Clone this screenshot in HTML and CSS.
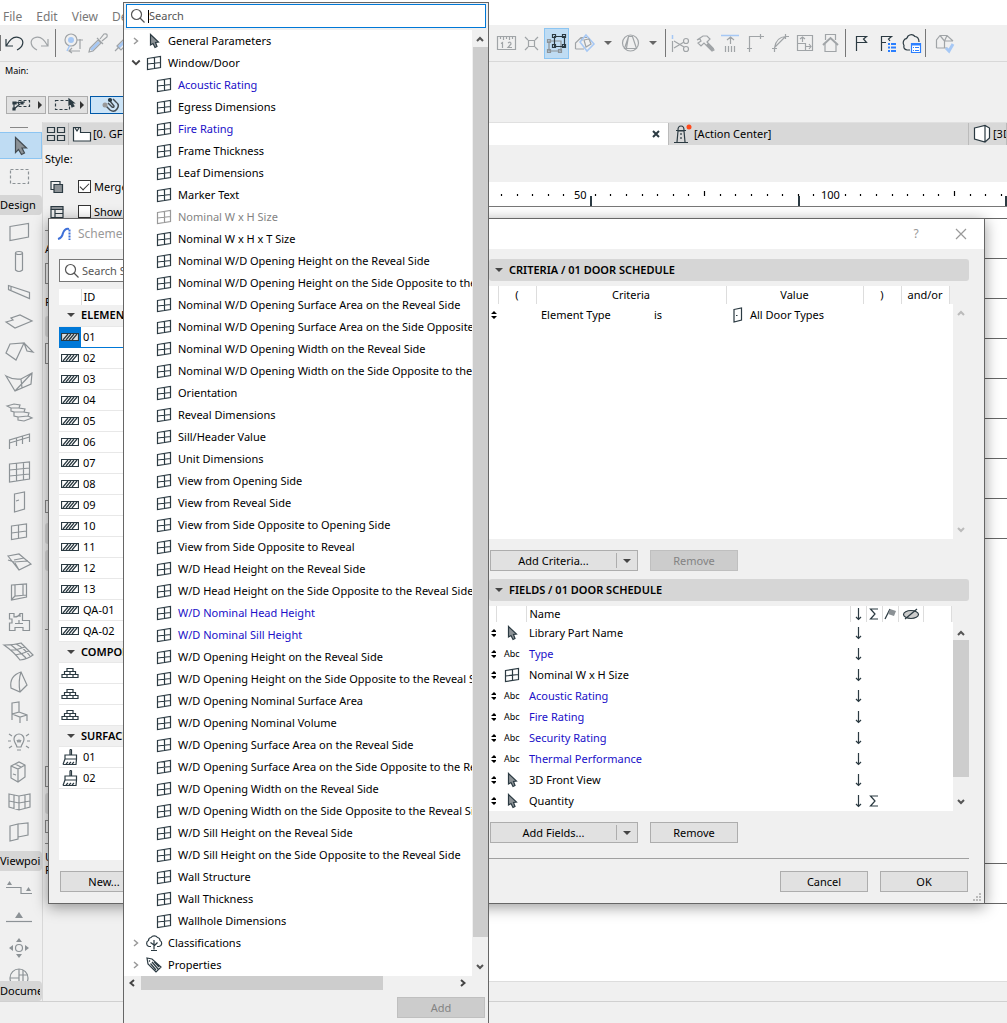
FILE: index.html
```html
<!DOCTYPE html>
<html lang="en">
  <head>
    <meta charset="UTF-8" />
    <meta name="viewport" content="width=device-width, initial-scale=1.0" />
    <title>Scheme Settings</title>
    <link rel="stylesheet" href="styles.css">
  </head>
  <body>
    <svg class="sprite" aria-hidden="true">
      <symbol id="window" viewBox="0 0 16 16"><path d="M1.500 3.500 14.500 1.500V12.500L1.500 14.500ZM8.500 2.500V13.500M1.500 9 14.500 7.500" /></symbol>
      <symbol id="cursor" viewBox="0 0 16 16"><path class="fill" d="M4.500 1.500V12L7 10.500 9 14.500 11 13.500 9.500 9.500 12.500 9Z" /></symbol>
      <symbol id="tree" viewBox="0 0 18 18"><path d="M6 12.500H4A3.200 3.200 0 0 1 3.500 6.500 3 3 0 0 1 6 3.500 4 4 0 0 1 12.500 3.500 3 3 0 0 1 15 6.500 3.200 3.200 0 0 1 14 12.500H12M9 6V15.500M9 11 5.500 8.500M9 12 12.500 8.500M6 16.500H12" /></symbol>
      <symbol id="tag" viewBox="0 0 18 18"><path d="M2 2 7 3 16 11 11 16 3 8ZM7 6 13 13M9 5.500 14 11M5.500 7.500 11 14M4 4.500 5 5.500" /></symbol>
      <symbol id="glass" viewBox="0 0 16 16"><circle cx="6.500" cy="6.500" r="5" /><path d="M10 10 14.500 14.500" /></symbol>
      <symbol id="hatch" viewBox="0 0 18 8"><path d="M.5.5H17.500V7.500H.5ZM2 7 7 1M5 7 10 1M8 7 13 1M11 7 16 1" /></symbol>
      <symbol id="bricks" viewBox="0 0 18 12"><path d="M6 1.500H12V4.500H6ZM3.500 4.500H14.500V7.500H3.500ZM1 7.500H17V10.500H1ZM9 4.500V7.500M6 7.500V10.500M12 7.500V10.500" /></symbol>
      <symbol id="brush" viewBox="0 0 18 18"><path d="M9 1.500V6.500M10.500 1.500V6.500M9 1.500H10.500M4 7H15.500V11H4ZM4 11 2 16.500M15.500 11 15 16.500H2M5 16 7 14M8 16 10 14M11 16 13 14" /></symbol>
      <symbol id="door" viewBox="0 0 12 16"><path d="M2 2.500 9.500 1V13L2 15ZM4 8.500H5.500" /></symbol>
      <symbol id="down" viewBox="0 0 8 14"><path d="M4.500 1V12M2 10 4.500 12.500 7 10" /></symbol>
      <symbol id="sigma" viewBox="0 0 10 12"><path d="M9 1H1.500L6 6 1.500 11H9" /></symbol>
      <symbol id="chev-up" viewBox="0 0 8 6"><path d="M1 5 4 2 7 5" /></symbol>
      <symbol id="chev-down" viewBox="0 0 8 6"><path d="M1 1 4 4 7 1" /></symbol>
      <symbol id="chev-right" viewBox="0 0 6 8"><path d="M1 1 4.500 4 1 7" /></symbol>
      <symbol id="chev-left" viewBox="0 0 6 8"><path d="M5 1 1.500 4 5 7" /></symbol>
      <symbol id="caret" viewBox="0 0 8 4"><path d="M0 0H8L4 4Z" /></symbol>
      <symbol id="grab" viewBox="0 0 6 8"><path d="M3 0 6 3H0ZM3 8 0 5H6Z" /></symbol>
    </svg>

    <div class="app">
      <nav class="menubar">
        <a href="#">File</a>
        <a href="#">Edit</a>
        <a href="#">View</a>
        <a href="#">Design</a>
      </nav>

      <div class="toolbar">
        <span class="sep"></span>
        <button class="tool dark" aria-label="Undo"><svg viewBox="0 0 25 24"><path d="M4 8V15H11M4.500 14.500C9 6 14 5 18 7 23 10 21 16 15 19" /></svg></button>
        <button class="tool" aria-label="Redo"><svg viewBox="0 0 25 24"><path d="M21 8V15H14M20.500 14.500C16 6 11 5 7 7 2 10 4 16 10 19" /></svg></button>
        <span class="sep left-sep"></span>
        <button class="tool" aria-label="Find and select"><svg viewBox="0 0 25 24"><circle cx="10" cy="9" r="6" /><circle class="sky-fill" cx="10" cy="9" r="3" /><path class="sky" d="M9 14 6 20" /><path d="M16 9H22M19 8V18M8 20H19M11 17 8 20 11 22" /></svg></button>
        <button class="tool" aria-label="Pick up parameters"><svg viewBox="0 0 25 24"><path class="sky thick" d="M5 19 13 11" /><path d="M3 21 4 17 12 9 15 12 7 20ZM11 7 17 13M14 8 18 3Q22 2 21 6L16 10" /></svg></button>
        <button class="tool" aria-label="Inject parameters"><svg viewBox="0 0 25 24"><path class="sky thick" d="M7 17 14 10" /><path d="M4 20 7 17M6 15 15 6 19 10 10 19Z" /></svg></button>
        <span class="toolbar-gap"></span>
        <button class="tool" aria-label="Measure"><svg viewBox="0 0 25 24"><path d="M3.500 5.500H21.500V18.500H3.500ZM6.500 6V8M9.500 6V9M12.500 6V8M15.500 6V9M18.500 6V8M7 12.500 8.500 11.500V17M14 12Q17 10 17 13L14 16.500H18" /></svg></button>
        <button class="tool" aria-label="Snap"><svg viewBox="0 0 25 24"><path d="M9.500 9.500H15.500V15.500H9.500ZM6 6 9 9M19 6 16 9M6 19 9 16M19 19 16 16" /></svg></button>
        <button class="tool pressed" aria-label="Suspend groups"><svg viewBox="0 0 25 24"><path class="mid" d="M5 10H17V20H5ZM3.500 8.500H6.500V11.500H3.500ZM3.500 18.500H6.500V21.500H3.500ZM14.500 18.500H17.500V21.500H14.500Z" /><path class="ink" d="M10.500 5.500H20.500V15.500H10.500ZM8.500 3.500H11.500V6.500H8.500ZM18.500 3.500H21.500V6.500H18.500ZM8.500 13.500H11.500V16.500H8.500ZM18.500 13.500H21.500V16.500H18.500Z" /></svg></button>
        <button class="tool next-tool" aria-label="Trace"><svg viewBox="0 0 25 24"><path d="M2.500 18V12L8 6.500H14M2.500 18H11M8 7 9 10" /><path class="sky" d="M13 4 21 13 14 20 7 11Z" /><path d="M11 9 16 8 18 13 13 16Z" /></svg></button>
        <button class="tool more" aria-label="Trace options"><svg class="caret"><use href="#caret" /></svg></button>
        <button class="tool" aria-label="Reference"><svg viewBox="0 0 25 24"><circle cx="12.500" cy="12" r="8" /><path d="M10.500 5.500H14.500L18.500 17.500H6.500ZM10.500 5.500 8.500 17" /></svg></button>
        <button class="tool more" aria-label="Reference options"><svg class="caret"><use href="#caret" /></svg></button>
        <span class="sep"></span>
        <button class="tool" aria-label="Split"><svg viewBox="0 0 25 24"><path class="sky" d="M4.500 4V8" /><path d="M4.500 10V21M6 10 16 16M6 17 16 11" /><circle cx="18" cy="10" r="2.500" /><circle cx="18" cy="18" r="2.500" /></svg></button>
        <button class="tool" aria-label="Adjust"><svg viewBox="0 0 25 24"><path d="M4 9 10 5H14L17 8 14 11 20 17 21 19 19 20 11 12 8 15 5 12 8 10 7 8Z" /><path class="thick" d="M14 13 20 19" /></svg></button>
        <button class="tool" aria-label="Align"><svg viewBox="0 0 25 24"><path class="sky" d="M3 4.500H21" /><path d="M12.500 6V13M9 9 12.500 6 16 9M7.500 15V21M10.500 15V21M13.500 15V21M16.500 15V21" /></svg></button>
        <button class="tool" aria-label="Intersect"><svg viewBox="0 0 25 24"><path d="M6.500 21V5.500H21M4 17.500H9M17.500 3V8" /></svg></button>
        <button class="tool" aria-label="Fillet"><svg viewBox="0 0 25 24"><path d="M6.500 21V17Q8 6 18 5.500H21M4 17.500H9M17.500 3V8M7 16 17 6" /></svg></button>
        <button class="tool" aria-label="Resize"><svg viewBox="0 0 25 24"><path d="M4.500 4.500H19.500V19.500H4.500ZM4.500 12.500H12.500V19.500M9.500 11V6M7 8 9.500 6 12 8M13 15.500H18M16 13 18 15.500 16 18" /></svg></button>
        <button class="tool" aria-label="Home story"><svg viewBox="0 0 25 24"><path class="heavy" d="M5 14 12.500 7 20 14" /><path d="M7 13V20.500H18V13M7.500 9V3.500H17.500V9" /></svg></button>
        <span class="sep"></span>
        <button class="tool dark" aria-label="Flag"><svg viewBox="0 0 25 24"><path d="M8.500 20V5.500H18.500L15.500 8 18.500 11.500H8.500" /></svg></button>
        <button class="tool dark" aria-label="Flag list"><svg viewBox="0 0 25 24"><path d="M8.500 20V5.500H18.500L15.500 8 17 10M8.500 11.500H13" /><path class="blue" d="M15 13H17M18 13H23M15 16.500H17M18 16.500H23M15 20H17M18 20H23" /></svg></button>
        <button class="tool dark" aria-label="Cloud list"><svg viewBox="0 0 25 24"><path d="M12 19 9 19Q5 18 6 14.500 4 11 7 8 9 8 10 5 14 2 17 5.500 21 6 21 11" /><path class="blue-box" d="M13.500 12.500H22.500V21.500H13.500Z" /><path class="blue" d="M13 13.500H23" /><path class="blue-thin" d="M15 16.500H16M17 16.500H21M15 19.500H16M17 19.500H21" /></svg></button>
        <span class="sep"></span>
        <button class="tool last-tool" aria-label="Check model"><svg viewBox="0 0 25 24"><path d="M4.500 17V9L8 4.500H15L21 10M8 4.500 12.500 10V17H4.500M12.500 10H21M12.500 17H15M15 4.500 12.500 10" /><path class="sky thick" d="M14 17 17 20 21 13" /></svg></button>
      </div>

      <div class="infobar">
        <div class="info-label">Main:</div>
        <div class="info-buttons">
          <button class="info-btn" aria-label="Geometry method"><svg viewBox="0 0 30 18"><path d="M7 13V7L18 6M7 13 13 8" /><path class="dash" d="M11.500 4.500H22.500V10.500H11.500Z" /><path class="node" d="M6 6H9V8H6ZM6 12H8V14H6ZM14 6H16V8H14Z" /></svg><i class="side-caret"></i></button>
          <button class="info-btn" aria-label="Selection method"><svg viewBox="0 0 30 18"><path class="dash" d="M6.500 4.500H20.500V13.500H6.500Z" /><path class="node" d="M20 3V9L22 8 23 11 25 10 23 7H25Z" /></svg><i class="side-caret"></i></button>
          <button class="info-btn on" aria-label="Magnet"><svg viewBox="0 0 30 18"><path class="magnet" d="M9 9 14 14Q18 17 21 13T20 6L17 3M12 7 16 11Q18 12 18 10L14 5" /><circle class="dot" cx="9" cy="9" r="2.500" /><circle class="node" cx="14" cy="4" r="1.500" /></svg></button>
        </div>
      </div>

      <div class="workspace">
        <div class="toolbox">
          <div class="grip-line"></div>
          <button class="box-tool selected" aria-label="Arrow"><svg viewBox="0 0 28 28"><path class="fill" d="M9.500 5.500V20.500L12.500 17.500 15.500 22.500 18.500 21 16 16H20.500Z" /></svg></button>
          <button class="box-tool marquee" aria-label="Marquee"><svg viewBox="0 0 28 28"><path class="dash" d="M4.500 6.500H22.500V20.500H4.500Z" /></svg></button>
          <div class="box-head">Design</div>
          <div class="box-group">
            <button class="box-tool" aria-label="Wall"><svg viewBox="0 0 28 28"><path d="M4 8.500 22.500 5.500V19L4 22.500Z" /></svg></button>
            <button class="box-tool" aria-label="Column"><svg viewBox="0 0 28 28"><ellipse cx="13" cy="5" rx="3.500" ry="1.500" /><path d="M9.500 5V22Q13 25 16.500 22V5" /></svg></button>
            <button class="box-tool" aria-label="Beam"><svg viewBox="0 0 28 28"><path d="M2.500 7.500 23.500 14.500V20.500L2.500 11.500ZM5 8.500V12" /></svg></button>
            <button class="box-tool" aria-label="Slab"><svg viewBox="0 0 28 28"><path d="M0 14 7 12 5 10 14 7 26 13 9 20Z" /></svg></button>
            <button class="box-tool" aria-label="Roof"><svg viewBox="0 0 28 28"><path d="M0 15 4 6 18 5 10 22ZM18 5 27 14 21 13 18 5" /></svg></button>
            <button class="box-tool" aria-label="Shell"><svg viewBox="0 0 28 28"><path d="M0 8 9 23 25 16 26 5 15 11Q7 12 0 8ZM9 23 26 5M15 11 16 20" /></svg></button>
            <button class="box-tool" aria-label="Stair"><svg viewBox="0 0 28 28"><path d="M1 8 8 6 14 7 13 10 19 11 18 14 23 15 22 18 26 20 18 23 12 22V19L8 18V14L5 13V10ZM5 10 13 10M8 14 18 14M12 19 22 18" /></svg></button>
            <button class="box-tool" aria-label="Railing"><svg viewBox="0 0 28 28"><path d="M3.500 21V12L23.500 6V14M10.500 18V10M16.500 16V8M3.500 15 23.500 9" /></svg></button>
            <button class="box-tool" aria-label="Curtain wall"><svg viewBox="0 0 28 28"><path d="M3.500 6 23.500 4V21L3.500 24ZM10.500 5V23M17.500 5V22M3.500 12 23.500 10M3.500 18 23.500 16" /></svg></button>
            <button class="box-tool" aria-label="Door"><svg viewBox="0 0 28 28"><path d="M8.500 6 18.500 4V21L8.500 24ZM10 13 13 12" /></svg></button>
            <button class="box-tool" aria-label="Window"><svg viewBox="0 0 28 28"><path d="M5.500 8 20.500 6V19L5.500 21.500ZM12.500 7V20M5.500 15 20.500 13" /></svg></button>
            <button class="box-tool" aria-label="Skylight"><svg viewBox="0 0 28 28"><path d="M2 8 13 6 25 16 13 22ZM8 12 18 10M2 12 8 14 22 13M13 22 9 15" /></svg></button>
            <button class="box-tool" aria-label="Opening"><svg viewBox="0 0 28 28"><path d="M5.500 7 20.500 6V19L5.500 22ZM9 7V18L20 17M9 18 5 22M17 6V17" /></svg></button>
            <button class="box-tool" aria-label="Zone"><svg viewBox="0 0 28 28"><path d="M3.500 5.500H8V9Q13 9 14 5.500H16.500V12.500H23.500V22.500H17V19.500H9V22.500H3.500V15H6V11H3.500ZM9 15.500H17M13 12V15M14 5.500V9" /></svg></button>
            <button class="box-tool" aria-label="Mesh"><svg viewBox="0 0 28 28"><path d="M-2 7Q8 7 15 5L27 17Q22 21 14 22 8 14-2 7ZM5 7Q13 13 20 20M10 6Q18 10 24 18M4 12Q12 12 19 9M9 17Q16 16 23 13" /></svg></button>
            <button class="box-tool" aria-label="Morph"><svg viewBox="0 0 28 28"><path d="M5 20Q3 8 15 4L21 17 14 24ZM15 4Q12 13 14 24" /></svg></button>
            <button class="box-tool" aria-label="Object"><svg viewBox="0 0 28 28"><path d="M6 5 13 4V14L6 16ZM6 16V22M13 14 21 17V23M6 16 14 19 21 17M14 19V25" /></svg></button>
            <button class="box-tool" aria-label="Lamp"><svg viewBox="0 0 28 28"><path d="M11 19C10 15 8 15 8 11A5 5 0 0 1 18 11C18 15 16 15 15 19ZM11 22H15M11 12 12 14 13 12 14 14 15 12M3 6 6 8M23 6 20 8M2 13H5M21 13H24M3 20 6 18M23 20 20 18" /></svg></button>
            <button class="box-tool" aria-label="Equipment"><svg viewBox="0 0 28 28"><path d="M5 8 13 4 19 7V19L12 24 5 20ZM5 8 12 11 19 7M12 11V24M9 6 15 9M7 16 10 17" /></svg></button>
            <button class="box-tool" aria-label="Panel"><svg viewBox="0 0 28 28"><path d="M3 6 13 8 24 6V19L13 22 3 19ZM8 7V21M13 8V22M19 7V20M3 13 13 15 24 13" /></svg></button>
            <button class="box-tool" aria-label="End wall"><svg viewBox="0 0 28 28"><path d="M4 8 12 6V21L4 23ZM12 6 22 5V17L12 19" /></svg></button>
          </div>
          <div class="box-head">Viewpoint</div>
          <div class="box-group views">
            <button class="box-tool" aria-label="Section"><svg viewBox="0 0 28 28"><path d="M0 13.500H15V19.500H26" /><path class="solid" d="M1 11 3.500 7 6 11ZM20 17 22.500 13 25 17Z" /></svg></button>
            <button class="box-tool" aria-label="Elevation"><svg viewBox="0 0 28 28"><path d="M0 17.500H26" /><path class="solid" d="M9 14 13 8 17 14Z" /></svg></button>
            <button class="box-tool" aria-label="Interior elevation"><svg viewBox="0 0 28 28"><circle cx="13" cy="14" r="3.500" /><path class="solid" d="M10 8 13 4 16 8ZM10 20 13 24 16 20ZM7 11 3 14 7 17ZM19 11 23 14 19 17Z" /></svg></button>
            <button class="box-tool" aria-label="Detail"><svg viewBox="0 0 28 28"><circle cx="13" cy="14" r="9" /><path d="M13 5V23M4 14H13M17 6V18M13 11H22" /></svg></button>
          </div>
          <div class="box-head">Document</div>
        </div>

        <div class="main">
          <div class="tabs">
            <button class="tab grid-tab" aria-label="Tab overview"><svg viewBox="0 0 20 16"><path d="M1.500 1.500H8.500V6.500H1.500ZM11.500 1.500H18.500V6.500H11.500ZM1.500 9.500H8.500V14.500H1.500ZM11.500 9.500H18.500V14.500H11.500Z" /></svg></button>
            <button class="tab plan-tab"><svg viewBox="0 0 20 16"><path class="paper" d="M1.500 1.500H8.500V6.500H18.500V15H1.500ZM3 2 5 5 7 2" /></svg>[0. GFL]</button>
            <div class="tab active"><button class="tab-close" aria-label="Close tab"><svg viewBox="0 0 8 8"><path d="M1 1 7 7M7 1 1 7" /></svg></button></div>
            <button class="tab action-tab"><svg viewBox="0 0 20 20"><path d="M1 18.500H15M4 18 5 7H11L12 18M3 6.500H13M5 6Q5 2 8 2T11 6M8 9V11M8 13V15" /><circle class="alert" cx="16" cy="3" r="2.500" /></svg>[Action Center]</button>
            <button class="tab view-tab"><svg viewBox="0 0 20 20"><path class="paper" d="M1.500 4 12 1.500 16.500 4V14L12 18 1.500 15ZM12 1.500V18" /></svg>[3D]</button>
          </div>

          <div class="content">
            <div class="settings">
              <div class="set-title">Style:</div>
              <div class="set-row"><svg viewBox="0 0 14 14"><path d="M1 1.500H10V9.500H1Z" /><path class="fill" d="M4 4.500H12.500V12.500H4Z" /></svg><input type="checkbox" id="merge" checked /><label for="merge">Merge</label></div>
              <div class="set-row"><svg viewBox="0 0 14 14"><path class="fill" d="M1 1.500H13V4.500H1Z" /><path d="M1 4.500V12.500H13V4.500M5 5V12M5 8.500H13" /></svg><input type="checkbox" id="show" /><label for="show">Show</label></div>
              <hr />
              <p>A</p>
              <div class="set-box"></div>
              <p>F</p>
              <div class="set-button"></div>
              <div class="set-box"></div>
              <div class="set-group">
                <div class="set-box small"></div>
                <div class="set-button"></div>
                <div class="set-button"></div>
              </div>
              <div class="set-group lower">
                <hr />
              </div>
              <div class="set-group">
                <div class="set-box"></div>
                <div class="set-button"></div>
                <div class="set-box small"></div>
                <hr />
                <div class="units">U<br />F</div>
              </div>
            </div>
            <div class="drawing">
              <div class="option-strip"></div>
              <div class="ruler">
                <svg viewBox="0 0 664 25">
                  <path class="minor" d="M158.500 12V14M174.500 12V14M189.500 12V14M205.500 12V14M220.500 12V14M252.500 12V14M267.500 12V14M283.500 12V14M299.500 12V14M314.500 12V14M330.500 12V14M345.500 12V14M377.500 12V14M392.500 12V14M408.500 12V14M424.500 12V14M439.500 12V14M455.500 12V14M470.500 12V14M502.500 12V14M517.500 12V14M533.500 12V14M549.500 12V14M564.500 12V14M580.500 12V14M595.500 12V14M627.500 12V14M642.500 12V14M658.500 12V14M361.500 9V14M611.500 9V14" />
                  <path class="major" d="M248 14V24M456 14V24M663 14V24" />
                  <text x="231" y="17">50</text>
                  <text x="478" y="17">100</text>
                </svg>
              </div>
              <div class="canvas">
                <div class="line first"></div>
                <div class="line"></div>
                <div class="line"></div>
                <div class="line"></div>
                <div class="line"></div>
                <div class="line"></div>
                <div class="line"></div>
                <div class="line"></div>
                <div class="line"></div>
                <div class="line tall"></div>
                <div class="line"></div>
              </div>
              <div class="canvas-foot"></div>
            </div>
          </div>
        </div>
      </div>
      <div class="statusbar"></div>
    </div>

    <div class="dialog" role="dialog" aria-label="Scheme Settings">
      <div class="titlebar">
        <svg class="logo" viewBox="0 0 16 16"><path d="M1 13Q5 12 6 7 8 2 12 3" /><path class="logo-dots" d="M12.500 3.500V14" /></svg>
        <span class="title">Scheme Settings</span>
        <button class="win-btn" aria-label="Help">?</button>
        <button class="win-btn" aria-label="Close"><svg viewBox="0 0 12 12"><path d="M1 1 11 11M11 1 1 11" /></svg></button>
      </div>
      <div class="dialog-body">
        <div class="schemes">
          <label class="search"><svg viewBox="0 0 16 16"><use href="#glass" /></svg><input type="text" placeholder="Search Schemes" aria-label="Search Schemes" /></label>
          <div class="scheme-list">
            <table>
              <thead><tr><th class="pic"></th><th>ID</th></tr></thead>
              <tbody>
                <tr class="group"><td colspan="2"><svg class="caret"><use href="#caret" /></svg>ELEMENTS</td></tr>
                <tr class="current"><td><svg class="hatch"><use href="#hatch" /></svg></td><td>01</td></tr>
                <tr><td><svg class="hatch"><use href="#hatch" /></svg></td><td>02</td></tr>
                <tr><td><svg class="hatch"><use href="#hatch" /></svg></td><td>03</td></tr>
                <tr><td><svg class="hatch"><use href="#hatch" /></svg></td><td>04</td></tr>
                <tr><td><svg class="hatch"><use href="#hatch" /></svg></td><td>05</td></tr>
                <tr><td><svg class="hatch"><use href="#hatch" /></svg></td><td>06</td></tr>
                <tr><td><svg class="hatch"><use href="#hatch" /></svg></td><td>07</td></tr>
                <tr><td><svg class="hatch"><use href="#hatch" /></svg></td><td>08</td></tr>
                <tr><td><svg class="hatch"><use href="#hatch" /></svg></td><td>09</td></tr>
                <tr><td><svg class="hatch"><use href="#hatch" /></svg></td><td>10</td></tr>
                <tr><td><svg class="hatch"><use href="#hatch" /></svg></td><td>11</td></tr>
                <tr><td><svg class="hatch"><use href="#hatch" /></svg></td><td>12</td></tr>
                <tr><td><svg class="hatch"><use href="#hatch" /></svg></td><td>13</td></tr>
                <tr><td><svg class="hatch"><use href="#hatch" /></svg></td><td>QA-01</td></tr>
                <tr><td><svg class="hatch"><use href="#hatch" /></svg></td><td>QA-02</td></tr>
                <tr class="group"><td colspan="2"><svg class="caret"><use href="#caret" /></svg>COMPONENTS</td></tr>
                <tr><td><svg class="bricks"><use href="#bricks" /></svg></td><td></td></tr>
                <tr><td><svg class="bricks"><use href="#bricks" /></svg></td><td></td></tr>
                <tr><td><svg class="bricks"><use href="#bricks" /></svg></td><td></td></tr>
                <tr class="group"><td colspan="2"><svg class="caret"><use href="#caret" /></svg>SURFACES</td></tr>
                <tr><td><svg class="brush"><use href="#brush" /></svg></td><td>01</td></tr>
                <tr><td><svg class="brush"><use href="#brush" /></svg></td><td>02</td></tr>
              </tbody>
            </table>
          </div>
          <button class="btn">New...</button>
        </div>

        <div class="details">
          <h2><svg class="caret"><use href="#caret" /></svg>CRITERIA / 01 DOOR SCHEDULE</h2>
          <div class="grid-box criteria">
            <table>
              <colgroup><col class="c-grab" /><col class="c-paren" /><col /><col class="c-value" /><col class="c-paren" /><col class="c-andor" /><col class="c-end" /></colgroup>
              <thead><tr><th></th><th>(</th><th>Criteria</th><th>Value</th><th>)</th><th>and/or</th><th class="blank"></th></tr></thead>
              <tbody>
                <tr><td><svg class="grab"><use href="#grab" /></svg></td><td></td><td><div class="crit"><span>Element Type</span><span>is</span></div></td><td><div class="value"><svg viewBox="0 0 12 16"><use href="#door" /></svg>All Door Types</div></td><td></td><td></td><td></td></tr>
              </tbody>
            </table>
            <div class="vscroll idle"><svg class="chev"><use href="#chev-up" /></svg><svg class="chev"><use href="#chev-down" /></svg></div>
          </div>
          <div class="actions">
            <div class="split"><button>Add Criteria...</button><button class="drop" aria-label="Add criteria options"><svg class="caret"><use href="#caret" /></svg></button></div>
            <button class="btn" disabled>Remove</button>
          </div>
          <h2><svg class="caret"><use href="#caret" /></svg>FIELDS / 01 DOOR SCHEDULE</h2>
          <div class="grid-box fields">
            <table>
              <colgroup><col class="f-grab" /><col class="f-icon" /><col /><col class="f-mark" /><col class="f-mark" /><col class="f-mark" /><col class="f-eye" /><col class="f-last" /><col class="f-end" /></colgroup>
              <thead><tr><th></th><th></th><th class="name">Name</th><th><svg class="down"><use href="#down" /></svg></th><th><svg class="sigma"><use href="#sigma" /></svg></th><th><svg class="flag" viewBox="0 0 12 12"><path d="M1 11 6 1" /><path class="flag-fill" d="M6 1 12 3 10 8 4 6Z" /></svg></th><th><svg class="eye" viewBox="0 0 18 12"><ellipse cx="9" cy="6.500" rx="7.500" ry="4" /><path d="M3 11 15 1" /></svg></th><th></th><th class="end"></th></tr></thead>
              <tbody>
                <tr><td><svg class="grab"><use href="#grab" /></svg></td><td><svg class="item"><use href="#cursor" /></svg></td><td>Library Part Name</td><td><svg class="down"><use href="#down" /></svg></td><td></td><td></td><td></td><td></td><td></td></tr>
                <tr><td><svg class="grab"><use href="#grab" /></svg></td><td class="abc">Abc</td><td class="prop">Type</td><td><svg class="down"><use href="#down" /></svg></td><td></td><td></td><td></td><td></td><td></td></tr>
                <tr><td><svg class="grab"><use href="#grab" /></svg></td><td><svg class="item"><use href="#window" /></svg></td><td>Nominal W x H Size</td><td><svg class="down"><use href="#down" /></svg></td><td></td><td></td><td></td><td></td><td></td></tr>
                <tr><td><svg class="grab"><use href="#grab" /></svg></td><td class="abc">Abc</td><td class="prop">Acoustic Rating</td><td><svg class="down"><use href="#down" /></svg></td><td></td><td></td><td></td><td></td><td></td></tr>
                <tr><td><svg class="grab"><use href="#grab" /></svg></td><td class="abc">Abc</td><td class="prop">Fire Rating</td><td><svg class="down"><use href="#down" /></svg></td><td></td><td></td><td></td><td></td><td></td></tr>
                <tr><td><svg class="grab"><use href="#grab" /></svg></td><td class="abc">Abc</td><td class="prop">Security Rating</td><td><svg class="down"><use href="#down" /></svg></td><td></td><td></td><td></td><td></td><td></td></tr>
                <tr><td><svg class="grab"><use href="#grab" /></svg></td><td class="abc">Abc</td><td class="prop">Thermal Performance</td><td><svg class="down"><use href="#down" /></svg></td><td></td><td></td><td></td><td></td><td></td></tr>
                <tr><td><svg class="grab"><use href="#grab" /></svg></td><td><svg class="item"><use href="#cursor" /></svg></td><td>3D Front View</td><td><svg class="down"><use href="#down" /></svg></td><td></td><td></td><td></td><td></td><td></td></tr>
                <tr><td><svg class="grab"><use href="#grab" /></svg></td><td><svg class="item"><use href="#cursor" /></svg></td><td>Quantity</td><td><svg class="down"><use href="#down" /></svg></td><td><svg class="sigma"><use href="#sigma" /></svg></td><td></td><td></td><td></td><td></td></tr>
              </tbody>
            </table>
            <div class="vscroll"><svg class="chev"><use href="#chev-up" /></svg><div class="thumb"></div><svg class="chev"><use href="#chev-down" /></svg></div>
          </div>
          <div class="actions">
            <div class="split"><button>Add Fields...</button><button class="drop" aria-label="Add fields options"><svg class="caret"><use href="#caret" /></svg></button></div>
            <button class="btn">Remove</button>
          </div>
          <div class="confirm">
            <button class="btn">Cancel</button>
            <button class="btn">OK</button>
          </div>
        </div>
      </div>
      <svg class="resize" viewBox="0 0 9 9"><path d="M6 0H8V2H6ZM3 3H5V5H3ZM6 3H8V5H6ZM0 6H2V8H0ZM3 6H5V8H3ZM6 6H8V8H6Z" /></svg>
    </div>

    <div class="picker">
      <label class="search picker-search"><svg viewBox="0 0 16 16"><use href="#glass" /></svg><i class="text-caret"></i><input type="text" placeholder="Search" aria-label="Search fields" /></label>
      <div class="picker-main">
        <ul class="tree">
          <li class="top"><button class="twist" aria-label="Expand"><svg viewBox="0 0 6 8"><use href="#chev-right" /></svg></button><svg class="item"><use href="#cursor" /></svg>General Parameters</li>
          <li class="top open"><button class="twist" aria-label="Collapse"><svg viewBox="0 0 8 6"><use href="#chev-down" /></svg></button><svg class="item"><use href="#window" /></svg>Window/Door</li>
          <li class="prop"><svg class="item"><use href="#window" /></svg>Acoustic Rating</li>
          <li><svg class="item"><use href="#window" /></svg>Egress Dimensions</li>
          <li class="prop"><svg class="item"><use href="#window" /></svg>Fire Rating</li>
          <li><svg class="item"><use href="#window" /></svg>Frame Thickness</li>
          <li><svg class="item"><use href="#window" /></svg>Leaf Dimensions</li>
          <li><svg class="item"><use href="#window" /></svg>Marker Text</li>
          <li class="used"><svg class="item"><use href="#window" /></svg>Nominal W x H Size</li>
          <li><svg class="item"><use href="#window" /></svg>Nominal W x H x T Size</li>
          <li><svg class="item"><use href="#window" /></svg>Nominal W/D Opening Height on the Reveal Side</li>
          <li><svg class="item"><use href="#window" /></svg>Nominal W/D Opening Height on the Side Opposite to the Reveal Side</li>
          <li><svg class="item"><use href="#window" /></svg>Nominal W/D Opening Surface Area on the Reveal Side</li>
          <li><svg class="item"><use href="#window" /></svg>Nominal W/D Opening Surface Area on the Side Opposite to the Reveal Side</li>
          <li><svg class="item"><use href="#window" /></svg>Nominal W/D Opening Width on the Reveal Side</li>
          <li><svg class="item"><use href="#window" /></svg>Nominal W/D Opening Width on the Side Opposite to the Reveal Side</li>
          <li><svg class="item"><use href="#window" /></svg>Orientation</li>
          <li><svg class="item"><use href="#window" /></svg>Reveal Dimensions</li>
          <li><svg class="item"><use href="#window" /></svg>Sill/Header Value</li>
          <li><svg class="item"><use href="#window" /></svg>Unit Dimensions</li>
          <li><svg class="item"><use href="#window" /></svg>View from Opening Side</li>
          <li><svg class="item"><use href="#window" /></svg>View from Reveal Side</li>
          <li><svg class="item"><use href="#window" /></svg>View from Side Opposite to Opening Side</li>
          <li><svg class="item"><use href="#window" /></svg>View from Side Opposite to Reveal</li>
          <li><svg class="item"><use href="#window" /></svg>W/D Head Height on the Reveal Side</li>
          <li><svg class="item"><use href="#window" /></svg>W/D Head Height on the Side Opposite to the Reveal Side</li>
          <li class="prop"><svg class="item"><use href="#window" /></svg>W/D Nominal Head Height</li>
          <li class="prop"><svg class="item"><use href="#window" /></svg>W/D Nominal Sill Height</li>
          <li><svg class="item"><use href="#window" /></svg>W/D Opening Height on the Reveal Side</li>
          <li><svg class="item"><use href="#window" /></svg>W/D Opening Height on the Side Opposite to the Reveal Side</li>
          <li><svg class="item"><use href="#window" /></svg>W/D Opening Nominal Surface Area</li>
          <li><svg class="item"><use href="#window" /></svg>W/D Opening Nominal Volume</li>
          <li><svg class="item"><use href="#window" /></svg>W/D Opening Surface Area on the Reveal Side</li>
          <li><svg class="item"><use href="#window" /></svg>W/D Opening Surface Area on the Side Opposite to the Reveal Side</li>
          <li><svg class="item"><use href="#window" /></svg>W/D Opening Width on the Reveal Side</li>
          <li><svg class="item"><use href="#window" /></svg>W/D Opening Width on the Side Opposite to the Reveal Side</li>
          <li><svg class="item"><use href="#window" /></svg>W/D Sill Height on the Reveal Side</li>
          <li><svg class="item"><use href="#window" /></svg>W/D Sill Height on the Side Opposite to the Reveal Side</li>
          <li><svg class="item"><use href="#window" /></svg>Wall Structure</li>
          <li><svg class="item"><use href="#window" /></svg>Wall Thickness</li>
          <li><svg class="item"><use href="#window" /></svg>Wallhole Dimensions</li>
          <li class="top"><button class="twist" aria-label="Expand"><svg viewBox="0 0 6 8"><use href="#chev-right" /></svg></button><svg class="item big"><use href="#tree" /></svg>Classifications</li>
          <li class="top"><button class="twist" aria-label="Expand"><svg viewBox="0 0 6 8"><use href="#chev-right" /></svg></button><svg class="item big"><use href="#tag" /></svg>Properties</li>
        </ul>
        <div class="vscroll"><svg class="chev"><use href="#chev-up" /></svg><div class="thumb"></div><svg class="chev"><use href="#chev-down" /></svg></div>
      </div>
      <div class="hscroll"><svg viewBox="0 0 6 8"><use href="#chev-left" /></svg><div class="thumb"></div><svg viewBox="0 0 6 8"><use href="#chev-right" /></svg></div>
      <div class="picker-foot"><button class="btn" disabled>Add</button></div>
    </div>
  </body>
</html>
```
FILE: styles.css
```css
* {
  box-sizing: border-box;
}

body {
  margin: 0;
  height: 100vh;
  overflow: hidden;
  position: relative;
  font-family: "Noto Sans", "Open Sans", sans-serif;
  font-size: 11px;
  line-height: 16px;
  color: #000;
  background-color: #f0f0f0;
}

button,
input {
  font: inherit;
  color: inherit;
}

button {
  padding: 0;
  border: none;
  background: none;
}

svg {
  display: block;
  flex: none;
  fill: none;
  stroke: #2b3a42;
  stroke-width: 1.2;
}

.sprite {
  position: absolute;
  width: 0;
  height: 0;
}

.caret,
.grab {
  fill: #444;
  stroke: none;
}

.caret {
  width: 8px;
  height: 4px;
}

.grab {
  width: 6px;
  height: 8px;
  fill: #000;
}

.fill {
  fill: #8c9296;
}

.item {
  width: 16px;
  height: 16px;
}

.prop {
  color: #2010c8;
}

/* application window */
.app {
  display: flex;
  flex-direction: column;
  height: 100vh;
}

.menubar {
  display: flex;
  gap: 14px;
  height: 25px;
  padding: 9px 3px 0;
  background-color: #fff;
  font-size: 12px;
}

.menubar a {
  color: #777;
  text-decoration: none;
}

.toolbar {
  display: flex;
  align-items: center;
  height: 37px;
  border-bottom: 1px solid #d8d8d8;
}

.sep {
  flex: none;
  width: 1px;
  height: 28px;
  margin: 0 2px;
  background-color: #777;
}

.sep:first-child {
  height: 16px;
  margin: 0 1px 0 0;
}

.left-sep {
  margin: 0 5px 0 3px;
}

.toolbar-gap {
  flex: none;
  width: 358px;
}

.tool {
  display: flex;
  flex: none;
  align-items: center;
  justify-content: center;
  width: 25px;
  height: 31px;
}

.tool svg {
  width: 25px;
  height: 24px;
  stroke: #a0a4a7;
}

.tool.dark svg {
  stroke: #2b3a42;
}

.tool.more {
  width: 20px;
}

.tool .caret {
  width: 8px;
  height: 4px;
  fill: #666;
  stroke: none;
}

.tool.pressed {
  background-color: #bfdcf3;
  border: 1px solid #8cc5f2;
}

.next-tool,
.last-tool {
  margin-left: 4px;
}

.sky {
  stroke: #a6c8f5;
  stroke-width: 1.5;
}

.sky-fill {
  fill: #a6c8f5;
  stroke: none;
}

.thick {
  stroke-width: 3;
}

.heavy {
  stroke-width: 2;
}

.mid {
  stroke: #8c9296;
}

.ink {
  stroke: #2b3a42;
}

.blue {
  stroke: #2a7fff;
  stroke-width: 2;
}

.blue-box {
  fill: #fff;
  stroke: #2a7fff;
}

.blue-thin {
  stroke: #2a7fff;
  stroke-width: 1;
}

.infobar {
  height: 60px;
}

.info-label {
  padding: 1px 5px 0;
  font-size: 9px;
}

.info-buttons {
  display: flex;
  gap: 2px;
  padding: 17px 6px 0;
}

.info-btn {
  display: flex;
  align-items: center;
  width: 40px;
  height: 18px;
  border: 1px solid #adadad;
  background-color: #e1e1e1;
}

.info-btn svg {
  width: 30px;
  height: 18px;
}

.info-btn.on {
  padding-left: 5px;
  border-color: #0058a8;
  background-color: #cce4f7;
}

.side-caret {
  border: 4px solid transparent;
  border-left: 4px solid #333;
  border-right: none;
  margin-left: 1px;
}

.dash {
  stroke-dasharray: 3 2;
}

.node {
  fill: #2b3a42;
}

.magnet {
  stroke: #444c52;
  stroke-width: 1.5;
}

.dot {
  fill: #999;
  stroke: none;
}

.workspace {
  display: flex;
  flex: 1;
  min-height: 0;
  border-bottom: 1px solid #d0d0d0;
}

.toolbox {
  display: flex;
  flex: none;
  flex-direction: column;
  width: 43px;
  border-right: 1px solid #d8d8d8;
  overflow: hidden;
}

.grip-line {
  flex: none;
  width: 18px;
  height: 1px;
  margin: 5px 10px 4px;
  background-color: #888;
}

.box-tool {
  display: flex;
  flex: none;
  align-items: center;
  width: 42px;
  height: 30px;
  padding-left: 6px;
}

.box-tool svg {
  width: 28px;
  height: 28px;
  stroke: #8c9296;
  overflow: visible;
}

.box-tool.selected {
  height: 27px;
  background-color: #bfdcf3;
  border: 1px solid #8cc5f2;
  border-left: none;
}

.box-tool.selected svg {
  stroke: #444c52;
}

.box-tool.marquee {
  height: 36px;
}

.box-head {
  flex: none;
  height: 20px;
  padding-top: 2px;
  background-color: #d6d6d6;
  border-radius: 0 4px 4px 0;
  border-right: 2px solid #d6d6d6;
  overflow: hidden;
}

.box-group {
  flex: none;
  padding: 2px 0 4px;
}

.box-group.views {
  height: 110px;
  padding-bottom: 0;
  overflow: hidden;
}

.solid {
  fill: #8c9296;
  stroke: none;
}

.main {
  display: flex;
  flex: 1;
  flex-direction: column;
  min-width: 0;
}

.tabs {
  display: flex;
  height: 23px;
  background-color: #d8d8d8;
  border-top: 1px solid #e0e0e0;
}

.tab {
  display: flex;
  flex: none;
  align-items: center;
  gap: 1px;
  border-right: 1px solid #bbb;
  white-space: nowrap;
  overflow: hidden;
}

.tab svg {
  width: 20px;
  height: 20px;
}

.grid-tab {
  width: 26px;
  padding-left: 3px;
}

.plan-tab {
  width: 120px;
  padding-left: 3px;
}

.paper {
  fill: #fff;
}

.tab.active {
  flex: 1;
  justify-content: flex-end;
  padding-right: 8px;
  background-color: #fff;
}

.tab-close svg {
  width: 8px;
  height: 8px;
  stroke-width: 2;
}

.action-tab {
  width: 300px;
  padding-left: 4px;
}

.view-tab {
  width: 38px;
  padding-left: 4px;
  gap: 0;
}

.alert {
  fill: #ff4a1c;
  stroke: none;
}

.content {
  display: flex;
  flex: 1;
  min-height: 0;
}

.settings {
  flex: none;
  width: 300px;
  padding: 6px 2px 0;
  overflow: hidden;
}

.set-title {
  margin-bottom: 7px;
}

.set-row {
  display: flex;
  align-items: center;
  height: 25px;
  padding-left: 5px;
}

.set-row svg {
  width: 14px;
  height: 14px;
}

.set-row input {
  appearance: none;
  width: 13px;
  height: 13px;
  margin: 0 3px 0 14px;
  border: 1px solid #333;
  background-color: #fff;
}

.set-row input:checked::after {
  content: "";
  display: block;
  width: 8px;
  height: 4px;
  margin: 2px 1px;
  border: solid #333;
  border-width: 0 0 1px 1px;
  transform: rotate(-45deg);
}

.settings hr {
  margin: 6px 0;
  border: none;
  border-top: 1px solid #888;
}

.settings p {
  margin: 10px 0 6px;
}

.set-box,
.set-button {
  height: 21px;
  margin-bottom: 6px;
  border: 1px solid #888;
}

.set-button {
  border: none;
  border-radius: 3px;
  background-color: #d6d6d6;
}

.set-box.small {
  height: 13px;
  margin-bottom: 10px;
}

.set-group {
  margin-top: 136px;
}

.set-group.lower {
  margin-top: 58px;
}

.units {
  line-height: 13px;
}

.drawing {
  display: flex;
  flex: 1;
  flex-direction: column;
  min-width: 0;
}

.option-strip {
  flex: none;
  height: 37px;
}

.ruler {
  flex: none;
  height: 25px;
  background-color: #fff;
  border-bottom: 1px solid #777;
  overflow: hidden;
}

.ruler svg {
  width: 664px;
  height: 25px;
}

.ruler text {
  font-size: 11px;
  fill: #000;
  stroke: none;
}

.major {
  stroke-width: 2;
}

.minor {
  stroke: #000;
}

.canvas {
  flex: 1;
  background-color: #fff;
}

.line {
  height: 40px;
  border-bottom: 1px solid #666;
}

.line.first {
  height: 12px;
}

.line.tall {
  height: 325px;
}

.canvas-foot {
  flex: none;
  height: 20px;
  border-top: 1px solid #ddd;
}

.statusbar {
  flex: none;
  height: 21px;
}

/* shared controls */
.search {
  display: flex;
  align-items: center;
  height: 23px;
  padding-left: 4px;
  border: 1px solid #777;
  background-color: #fff;
}

.search svg {
  width: 16px;
  height: 16px;
  stroke: #555;
}

.search input {
  flex: 1;
  min-width: 0;
  padding: 0;
  border: none;
  outline: none;
  background: none;
}

.search input::placeholder {
  color: #555;
}

.btn {
  width: 88px;
  height: 21px;
  border: 1px solid #adadad;
  background-color: #e1e1e1;
}

.btn:disabled {
  border-color: #bfbfbf;
  background-color: #ccc;
  color: #838383;
}

.vscroll {
  display: flex;
  flex: none;
  flex-direction: column;
  align-items: center;
  justify-content: space-between;
  width: 16px;
  padding: 6px 0;
  background-color: #f0f0f0;
}

.vscroll .chev {
  width: 8px;
  height: 6px;
  stroke: #555;
  stroke-width: 2;
}

.vscroll.idle .chev {
  stroke: #bbb;
}

.thumb {
  background-color: #cdcdcd;
}

/* scheme dialog */
.dialog {
  position: absolute;
  top: 218px;
  left: 48px;
  right: 22px;
  border: 1px solid #666;
  background-color: #f0f0f0;
  box-shadow: 0 3px 14px rgba(0, 0, 0, 0.4);
}

.titlebar {
  display: flex;
  align-items: center;
  height: 30px;
  padding: 0 8px;
  background-color: #fff;
  color: #999;
  font-size: 12px;
}

.logo {
  width: 16px;
  height: 16px;
  stroke: #3d6fd8;
  stroke-width: 2;
}

.logo-dots {
  stroke-dasharray: 2 1;
}

.title {
  flex: 1;
  padding-left: 5px;
}

.win-btn {
  display: flex;
  align-items: center;
  justify-content: center;
  width: 30px;
  height: 30px;
  margin-left: 15px;
}

.win-btn svg {
  width: 12px;
  height: 12px;
  stroke: #999;
}

.dialog-body {
  display: flex;
  padding: 10px 15px 11px 10px;
}

.schemes {
  display: flex;
  flex: none;
  flex-direction: column;
  width: 420px;
  margin-right: 10px;
}

.schemes .search input {
  padding-left: 2px;
}

.scheme-list {
  flex: 1;
  margin: 7px 0 11px;
  background-color: #fff;
}

.schemes .btn {
  margin-left: 1px;
}

table {
  width: 100%;
  border-collapse: collapse;
  table-layout: fixed;
}

th,
td {
  padding: 0;
  text-align: left;
  font-weight: normal;
  white-space: nowrap;
  overflow: hidden;
}

.scheme-list th {
  height: 16px;
  padding-left: 2px;
}

.scheme-list .pic {
  width: 22px;
  border-right: 1px solid #ddd;
}

.scheme-list td {
  height: 21px;
  padding-left: 2px;
  border-bottom: 1px solid #e8e8e8;
}

.scheme-list .group td {
  padding-left: 22px;
  background-color: #f0f0f0;
  font-weight: 600;
}

.group .caret {
  float: left;
  margin: 6px 0 0 -14px;
}

.hatch {
  width: 18px;
  height: 8px;
}

.bricks {
  width: 18px;
  height: 12px;
}

.brush {
  width: 18px;
  height: 18px;
}

.current td {
  border-top: 1px solid #0078d7;
  border-bottom: 1px solid #0078d7;
}

.current td:first-child {
  background-color: #0078d7;
}

.current .hatch {
  background-color: #ddd;
}

.details {
  flex: 1;
  min-width: 0;
}

h2 {
  display: flex;
  align-items: center;
  gap: 6px;
  height: 22px;
  margin: 0 0 5px;
  padding-left: 6px;
  border-radius: 3px;
  background-color: #d6d6d6;
  font-size: 11px;
  font-weight: 600;
}

.grid-box {
  display: flex;
  background-color: #fff;
}

.grid-box > table {
  flex: 1;
  width: 0;
  align-self: flex-start;
}

.grid-box th {
  height: 18px;
  border-right: 1px solid #ddd;
}

.grid-box th:last-child {
  border-right: none;
  background-color: #f0f0f0;
}

.grid-box td {
  height: 21px;
}

.grid-box td:first-child {
  padding-left: 2px;
}

.criteria {
  min-height: 253px;
}

.criteria th {
  text-align: center;
}

.criteria .vscroll {
  padding-top: 24px;
}

.c-grab {
  width: 9px;
}

.c-paren {
  width: 38px;
}

.c-value {
  width: 137px;
}

.c-andor {
  width: 48px;
}

.c-end {
  width: 4px;
}

.crit {
  display: grid;
  grid-template-columns: 113px 1fr;
  padding-left: 5px;
}

.value {
  display: flex;
  align-items: center;
  gap: 6px;
  padding-left: 6px;
}

.value svg {
  width: 12px;
  height: 16px;
}

.f-grab {
  width: 7px;
}

.f-icon {
  width: 30px;
}

.f-mark {
  width: 16px;
}

.f-eye {
  width: 25px;
}

.f-last {
  width: 28px;
}

.f-end {
  width: 2px;
}

.grid-box.fields th {
  height: 16px;
}

.fields td:nth-child(3),
.fields .name {
  padding-left: 3px;
}

.fields .item {
  margin-left: 8px;
}

.fields .abc {
  padding-left: 8px;
  font-size: 9px;
  line-height: 12px;
}

.fields .vscroll {
  padding-top: 24px;
}

.fields .thumb {
  flex: 1;
  width: 16px;
  margin: 4px 0 22px;
}

.down {
  width: 8px;
  height: 14px;
  margin: 0 auto;
}

.sigma {
  width: 10px;
  height: 12px;
  margin: 0 auto;
}

.flag {
  width: 12px;
  height: 12px;
  margin: 0 auto;
}

.flag-fill {
  fill: #8c9296;
  stroke: none;
}

.eye {
  width: 18px;
  height: 12px;
  margin: 0 auto;
  fill: #ccc;
}

.actions {
  display: flex;
  gap: 12px;
  padding: 11px 1px 8px;
}

.split {
  display: flex;
  align-items: center;
  width: 148px;
  height: 21px;
  border: 1px solid #adadad;
  background-color: #e1e1e1;
}

.split button {
  flex: 1;
}

.split .drop {
  display: flex;
  flex: none;
  align-items: center;
  justify-content: center;
  width: 21px;
  height: 15px;
  border-left: 1px solid #adadad;
}

.confirm {
  display: flex;
  justify-content: flex-end;
  gap: 12px;
  margin-top: 7px;
  padding: 12px 1px 0 0;
  border-top: 1px solid #a0a0a0;
}

.resize {
  position: absolute;
  right: 2px;
  bottom: 1px;
  width: 9px;
  height: 9px;
  fill: #bbb;
  stroke: none;
}

/* field picker */
.picker {
  position: absolute;
  top: 2px;
  left: 123px;
  width: 366px;
  border: 1px solid #666;
  background-color: #f0f0f0;
}

.picker-search {
  height: 24px;
  margin: 1px 2px 2px;
  padding-left: 3px;
  border-color: #0078d7;
}

.text-caret {
  width: 1px;
  height: 13px;
  margin-left: 2px;
  background-color: #000;
}

.picker-main {
  display: flex;
}

.tree {
  flex: 1;
  min-width: 0;
  margin: 0;
  padding: 0;
  list-style: none;
  background-color: #fff;
  overflow: hidden;
}

.tree li {
  display: flex;
  align-items: center;
  gap: 6px;
  height: 22px;
  padding-left: 32px;
  white-space: nowrap;
}

.tree .top {
  padding-left: 5px;
}

.twist {
  display: flex;
  align-items: center;
  justify-content: center;
  width: 14px;
  height: 16px;
  margin-right: -3px;
}

.twist svg {
  width: 6px;
  height: 12px;
  stroke: #999;
  stroke-width: 1.5;
}

.open .twist svg {
  width: 10px;
  height: 8px;
  stroke: #444;
}

.item.big {
  width: 18px;
  height: 18px;
  margin: 0 -1px;
}

.used {
  color: #838383;
}

.used svg {
  stroke: #999;
}

.picker .vscroll .thumb {
  flex: 1;
  width: 15px;
  margin: 5px 0 27px;
}

.hscroll {
  display: flex;
  align-items: center;
  height: 14px;
  padding: 0 22px 0 5px;
}

.hscroll svg {
  width: 6px;
  height: 8px;
  stroke: #444;
  stroke-width: 2;
}

.hscroll .thumb {
  width: 242px;
  height: 14px;
  margin: 0 auto 0 6px;
}

.picker-foot {
  display: flex;
  justify-content: flex-end;
  padding: 7px 3px 12px;
}
```
